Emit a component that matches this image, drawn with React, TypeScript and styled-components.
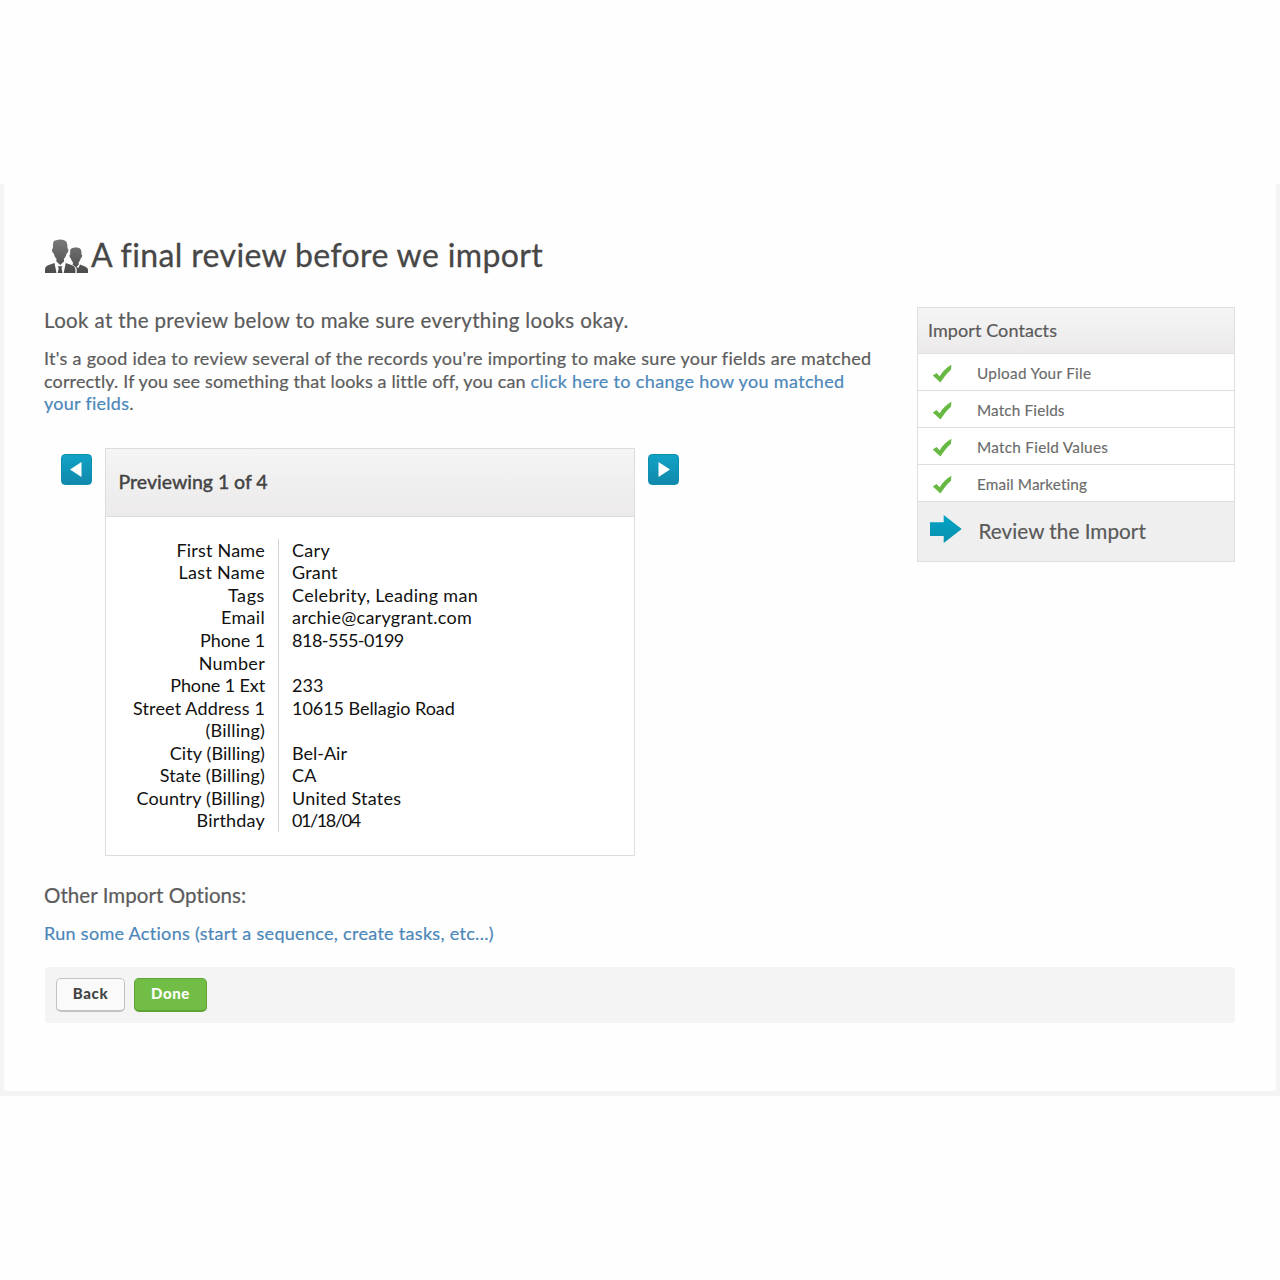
import React from "react";
import styled, { createGlobalStyle } from "styled-components";

const Global = createGlobalStyle`
  *, *::before, *::after { box-sizing: border-box; }
  body {
    margin: 0;
    background: #fefefe;
    font-family: Lato, "Open Sans", sans-serif;
    color: #5a5a5a;
  }
`;

const Page = styled.main`
  height: 1280px;
  padding-top: 184px;
  overflow: hidden;
`;

const Frame = styled.section`
  height: 912px;
  border: solid #f4f4f4;
  border-width: 0 4px 5px;
  padding: 54px 41px 0 40px;
`;

/* Single-line run of text with its own tracking */
const Run = styled.span<{ $ls?: number }>`
  letter-spacing: ${(p) => p.$ls ?? 0}px;
  white-space: nowrap;
`;

const TitleRow = styled.header`
  display: flex;
  height: 36px;
  gap: 3px;
  margin-bottom: 33px;
  padding-left: 1px;
`;

const Title = styled.h1`
  margin: 0;
  font-size: 32px;
  line-height: 34px;
  font-weight: 400;
  color: #474747;
  -webkit-text-stroke: 0.3px;
`;

const Columns = styled.div`
  display: flex;
  justify-content: space-between;
  align-items: flex-start;
  height: 549px;
`;

const MainColumn = styled.div`
  width: 850px;
`;

const Subtitle = styled.h2`
  margin: 0;
  font-size: 20.5px;
  line-height: 26px;
  font-weight: 400;
  color: #5b5b5b;
  -webkit-text-stroke: 0.2px;
`;

const Copy = styled.p`
  margin: 14px 0 0;
  font-size: 18px;
  line-height: 22.6px;
  -webkit-text-stroke: 0.2px;
  color: #5c5c5c;
`;

const Link = styled.a`
  color: #4c87b9;
  text-decoration: none;
`;

const Preview = styled.div`
  display: flex;
  align-items: flex-start;
  gap: 13px;
  margin: 33px 0 0 17px;
`;

const NavButton = styled.button`
  display: flex;
  width: 31px;
  height: 31px;
  margin-top: 6px;
  padding: 0;
  border: 1px solid #0e8fb0;
  border-radius: 4px;
  background: linear-gradient(#12a2c6, #1089ab);
`;

const Card = styled.article`
  width: 530px;
  height: 408px;
  border: 1px solid #dcdcdc;
  background: #fff;
`;

const CardHeader = styled.h3`
  display: flex;
  align-items: center;
  height: 68px;
  margin: 0;
  padding: 0 12.5px 1px;
  border-bottom: 1px solid #dcdcdc;
  background: linear-gradient(#f5f5f5, #eceaeb);
  font-size: 19.5px;
  font-weight: 500;
  color: #444;
  -webkit-text-stroke: 0.3px;
`;

const Records = styled.div`
  display: grid;
  grid-template-columns: 173px 1fr;
  margin-top: 22px;
  font-size: 18px;
  line-height: 22.55px;
  color: #111;
`;

const Labels = styled.div`
  padding-right: 13px;
  border-right: 1px solid #d4d4d4;
  text-align: right;
`;

const Values = styled.div`
  padding-left: 13px;
`;

const Line = styled.div`
  height: 22.55px;
  white-space: nowrap;
`;

const Steps = styled.aside`
  width: 318px;
  border: 1px solid #dedede;
  background: #fff;
`;

const StepsHeader = styled.h3`
  height: 45.5px;
  margin: 0;
  padding-left: 10px;
  border-bottom: 1px solid #dedede;
  background: linear-gradient(#f5f5f5, #eceaeb);
  font-size: 18px;
  line-height: 45px;
  font-weight: 400;
  -webkit-text-stroke: 0.2px;
`;

const Step = styled.div`
  display: flex;
  align-items: center;
  height: 37.1px;
  padding: 3px 0 0 14px;
  gap: 23px;
  border-bottom: 1px solid #dedede;
  font-size: 15.3px;
  color: #6b6b6b;
  -webkit-text-stroke: 0.15px;
`;

const CurrentStep = styled.div`
  display: flex;
  height: 59px;
  padding-left: 12px;
  gap: 16.5px;
  background: #efefef;
  font-size: 20.7px;
  line-height: 58px;
  -webkit-text-stroke: 0.2px;
`;

const Options = styled.section`
  padding-top: 26px;
`;

const Actions = styled.footer`
  display: flex;
  gap: 9px;
  height: 56px;
  margin: 22px 0 0 1px;
  padding: 11px;
  border-radius: 4px;
  background: #f4f4f4;
`;

const Button = styled.button<{ $primary?: boolean }>`
  width: ${(p) => (p.$primary ? 73 : 69)}px;
  height: 34px;
  padding: 0 0 2px;
  border: 1px solid ${(p) => (p.$primary ? "#5da336" : "#c2c2c2")};
  border-bottom-width: 2px;
  border-radius: 5px;
  background: ${(p) => (p.$primary ? "#71bd46" : "#fafafa")};
  color: ${(p) => (p.$primary ? "#fff" : "#444")};
  font: 900 15px Lato, sans-serif;
  letter-spacing: 0.6px;
`;

const Contacts = () => (
  <svg width="43" height="36" viewBox="0 0 43 36">
    <defs>
      <linearGradient id="ink" gradientUnits="userSpaceOnUse" x1="0" y1="1" x2="0" y2="35">
        <stop offset="0" stopColor="#7a7a7a" />
        <stop offset="1" stopColor="#4b4b4b" />
      </linearGradient>
    </defs>
    <g fill="url(#ink)">
      <path d="M15 1.500c-2.500 0-3.300.8-5 1C8.300 2.800 7.700 5 8 10.500c-1 0-1.200 1-.8 2.500.3 1.500.8 2.300 1.600 2.300.5 2.500 1.300 4 2.600 5.300v3L15.200 27l3.800-3.400v-3c1.300-1.300 2.100-2.800 2.600-5.300.8 0 1.300-.8 1.600-2.300.4-1.500.2-2.500-.8-2.500.3-5-.2-9-7.400-9Z" />
      <path d="M30.800 9.500c-2 0-2.600.6-4 .8-1.500.3-1.900 2.200-1.600 6.200-.8 0-.9.8-.6 2 .3 1.200.7 1.800 1.300 1.800.4 1.700 1 3 2 4v2.500l2.900 2.700 2.900-2.700v-2.500c1-1 1.600-2.300 2-4 .6 0 1-.6 1.300-1.800.3-1.200.2-2-.6-2 .3-4-.2-7-5.600-7Z" />
      <path d="M0 35v-3c0-2.500 1-4 3-4.700l6.500-2.300 2 10ZM18.700 35l2-10 6.500 2.300c2 .7 3.200 2.200 3.200 4.700v3ZM27.500 26l5.700 4 2-3.500 4.800 2c2 .8 3 2 3 3.900V35H31.700v-3c0-3-1.500-4.500-4.200-5.500Z" />
      <path d="M12.800 28.200h4.600l-.9 2 1 4.800h-4.800l1-4.800Z" />
    </g>
  </svg>
);

const Check = () => (
  <svg width="22" height="20" viewBox="0 0 22 20" style={{ marginTop: 2 }}>
    <path d="M.8 11.500 4.500 9l3.200 3.200C10.500 7.500 14.500 3.500 19.400.8l-.4 5C15.400 9 12 13 8.400 18.600Z" fill="#68b944" />
  </svg>
);

const CurrentArrow = () => (
  <svg width="32" height="28" viewBox="0 0 32 28" style={{ marginTop: 13 }}>
    <defs>
      <linearGradient id="teal" x1="0" y1="0" x2="0" y2="1">
        <stop offset="0" stopColor="#04a3c5" />
        <stop offset="1" stopColor="#078fae" />
      </linearGradient>
    </defs>
    <path d="M0 7.300h13.700V0L31.700 14l-18 14v-7H0Z" fill="url(#teal)" />
  </svg>
);

const Triangle = ({ next }: { next?: boolean }) => (
  <svg width="29" height="29" viewBox="0 0 29 29">
    <path d={next ? "M9.500 7 21 14.500 9.500 22Z" : "M19.500 7 8 14.500l11.500 7.500Z"} fill="#fff" />
  </svg>
);

const labels: [string, number][] = [
  ["First Name", 0.2], ["Last Name", 0.3], ["Tags", 0.6], ["Email", 0.3],
  ["Phone 1", -0.1], ["Number", 0.3], ["Phone 1 Ext", -0.12], ["Street Address 1", 0.13],
  ["(Billing)", 0.2], ["City (Billing)", 0.1], ["State (Billing)", 0.17],
  ["Country (Billing)", 0.15], ["Birthday", 0.2],
];

const values: [string, number][] = [
  ["Cary", 0.3], ["Grant", 0.2], ["Celebrity, Leading man", 0.32], ["archie@carygrant.com", 0.27],
  ["818-555-0199", -0.5], ["", 0], ["233", 0], ["10615 Bellagio Road", -0.05],
  ["", 0], ["Bel-Air", 0], ["CA", 0.2], ["United States", 0.22], ["01/18/04", -1.4],
];

const steps: [string, number][] = [
  ["Upload Your File", 0.3], ["Match Fields", 0.15], ["Match Field Values", 0.27], ["Email Marketing", 0.13],
];

const lines = (rows: [string, number][]) =>
  rows.map(([text, ls], i) => (
    <Line key={i}><Run $ls={ls}>{text}</Run></Line>
  ));

export default function App() {
  return (
    <Page>
      <Global />
      <Frame>
        <TitleRow>
          <Contacts />
          <Title><Run $ls={0.38}>A final review before we import</Run></Title>
        </TitleRow>
        <Columns>
          <MainColumn>
            <Subtitle><Run $ls={0.36}>Look at the preview below to make sure everything looks okay.</Run></Subtitle>
            <Copy>
              <Run $ls={0.285}>It's a good idea to review several of the records you're importing to make sure your fields are matched</Run><br />
              <Run $ls={0.14}>correctly. If you see something that looks a little off, you can </Run>
              <Link><Run $ls={0.34}>click here to change how you matched</Run></Link><br />
              <Run $ls={0.27}><Link>your fields</Link>.</Run>
            </Copy>
            <Preview>
              <NavButton aria-label="Previous"><Triangle /></NavButton>
              <Card>
                <CardHeader><Run $ls={-0.03}>Previewing 1 of 4</Run></CardHeader>
                <Records>
                  <Labels>{lines(labels)}</Labels>
                  <Values>{lines(values)}</Values>
                </Records>
              </Card>
              <NavButton aria-label="Next"><Triangle next /></NavButton>
            </Preview>
          </MainColumn>
          <Steps>
            <StepsHeader><Run $ls={0.08}>Import Contacts</Run></StepsHeader>
            {steps.map(([text, ls]) => (
              <Step key={text}><Check /><Run $ls={ls}>{text}</Run></Step>
            ))}
            <CurrentStep><CurrentArrow /><Run $ls={0.04}>Review the Import</Run></CurrentStep>
          </Steps>
        </Columns>
        <Options>
          <Subtitle><Run $ls={0.07}>Other Import Options:</Run></Subtitle>
          <Copy><Link><Run $ls={0.3}>Run some Actions (start a sequence, create tasks, etc...)</Run></Link></Copy>
        </Options>
        <Actions>
          <Button>Back</Button>
          <Button $primary>Done</Button>
        </Actions>
      </Frame>
    </Page>
  );
}
